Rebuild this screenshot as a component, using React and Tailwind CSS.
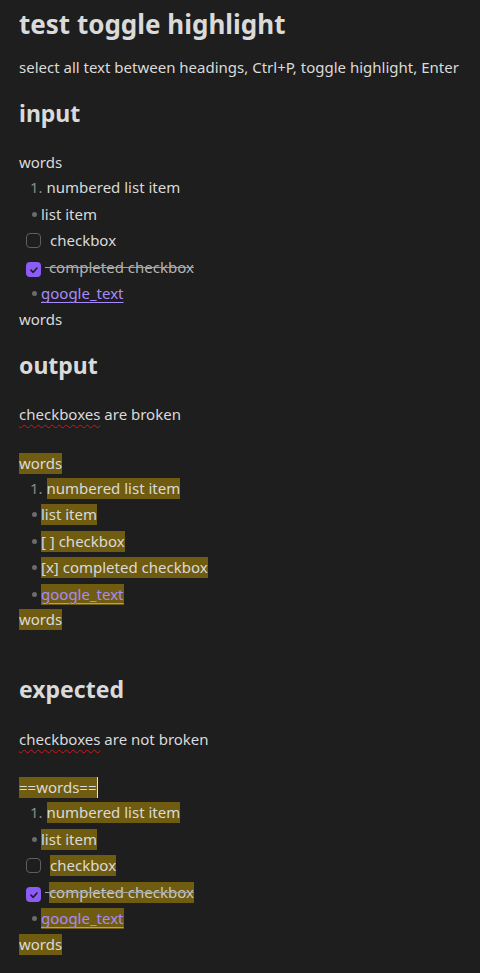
import React from "react";

const HL = "bg-[#705c10]";

const Dot = () => <span className="inline-block w-[5px] h-[5px] rounded-full bg-[#6b6b6b] mr-[4px] translate-y-[-3px]" />;

const Box = ({ checked }) =>
  checked ? (
    <span className="inline-flex items-center justify-center w-[15px] h-[15px] rounded-[4px] bg-[#8b5cf6] mr-[4px] translate-y-[2px]">
      <svg width="10" height="10" viewBox="0 0 10 10" fill="none">
        <path d="M2 5.2 L4.2 7.3 L8 3" stroke="#1e1e1e" strokeWidth="1.6" strokeLinecap="round" strokeLinejoin="round" />
      </svg>
    </span>
  ) : (
    <span className="inline-block w-[15px] h-[15px] rounded-[4px] border border-[#5f5f5f] mr-[4px] translate-y-[2px]" />
  );

const Mark = ({ on, children, className = "" }) =>
  on ? <span className={`${HL} inline-block h-[21px] leading-[21px] ${className}`}>{children}</span> : <span className={className}>{children}</span>;

const Row = ({ children, className = "" }) => (
  <div className={`h-[26.5px] leading-[26.5px] whitespace-pre ${className}`}>{children}</div>
);

const Link = () => <span className="text-[#a88bfa] underline underline-offset-[3px] decoration-1">google_text</span>;

const STRIKE = "line-through decoration-[#a0a0a0]";

// list block rendered three ways: input, output (broken), expected
const Block = ({ hl, broken, cursor }) => (
  <div>
    <div className="h-[24px] leading-[24px]">
      {cursor ? (
        <span className="inline-flex items-center">
          <Mark on>==words==</Mark>
          <span className="inline-block w-[1px] h-[21px] bg-[#e0e0e0]" />
        </span>
      ) : (
        <Mark on={hl}>words</Mark>
      )}
    </div>
    <Row className="pl-[11px]">
      <span className="text-[#8a8a8a]">1. </span>
      <Mark on={hl}>numbered list item</Mark>
    </Row>
    <Row className="pl-[13px]">
      <Dot />
      <Mark on={hl}>list item</Mark>
    </Row>
    {broken ? (
      <>
        <Row className="pl-[13px]">
          <Dot />
          <Mark on>[ ] checkbox</Mark>
        </Row>
        <Row className="pl-[13px]">
          <Dot />
          <Mark on>[x] completed checkbox</Mark>
        </Row>
      </>
    ) : (
      <>
        <Row className="pl-[7px]">
          <Box />
          <Mark on={hl} className="ml-[5px]">checkbox</Mark>
        </Row>
        <Row className="pl-[7px]">
          <Box checked />
          <span className={`${STRIKE} ${hl ? "text-[#c8c8c8]" : "text-[#b4b4b4]"}`}>
            {" "}
            <Mark on={hl} className={STRIKE}>completed checkbox</Mark>
          </span>
        </Row>
      </>
    )}
    <Row className="pl-[13px]">
      <Dot />
      <Mark on={hl}>
        <Link />
      </Mark>
    </Row>
    <div className="h-[24px] leading-[24px]">
      <Mark on={hl}>words</Mark>
    </div>
  </div>
);

const Spell = ({ children }) => (
  <span className="underline decoration-wavy decoration-[#d01818] decoration-1 underline-offset-[4px]">{children}</span>
);

export default function App() {
  return (
    <div className="min-h-screen bg-[#1e1e1e] text-[#dadada] px-[19px] text-[15px] font-['Noto_Sans',sans-serif]">
      <h1 className="text-[26px] font-bold leading-[36px] pt-[6px]">test toggle highlight</h1>
      <p className="h-[24px] leading-[24px] mt-[13px]">select all text between headings, Ctrl+P, toggle highlight, Enter</p>

      <h2 className="text-[23px] font-bold leading-[32px] mt-[18px]">input</h2>
      <div className="mt-[21px]">
        <Block />
      </div>

      <h2 className="text-[23px] font-bold leading-[32px] mt-[18px]">output</h2>
      <p className="h-[24px] leading-[24px] mt-[21px]">
        <Spell>checkboxes</Spell> are broken
      </p>
      <div className="mt-[25px]">
        <Block hl broken />
      </div>

      <h2 className="text-[23px] font-bold leading-[32px] mt-[42px]">expected</h2>
      <p className="h-[24px] leading-[24px] mt-[22px]">
        <Spell>checkboxes</Spell> are not broken
      </p>
      <div className="mt-[24px]">
        <Block hl cursor />
      </div>
    </div>
  );
}
